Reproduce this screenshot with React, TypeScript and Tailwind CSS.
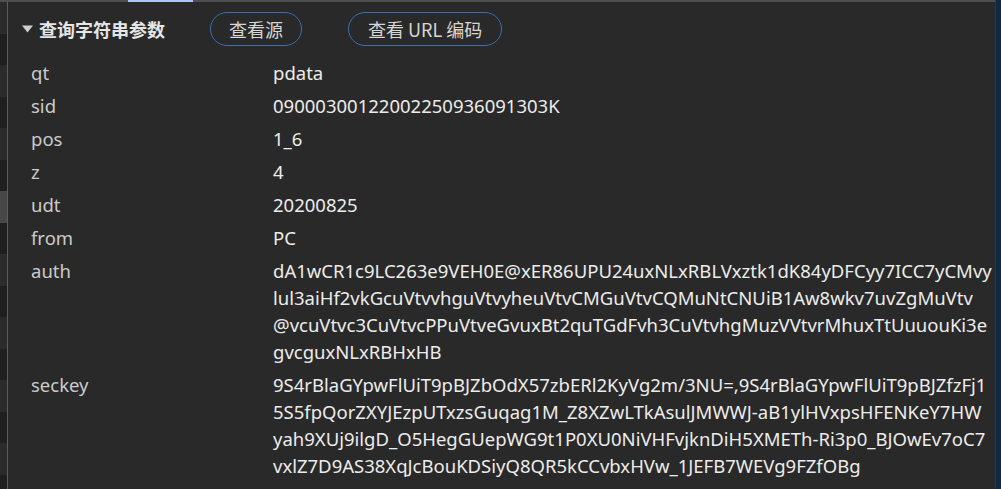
import React from "react";

interface Param {
  name: string;
  lines: string[];
}

const params: Param[] = [
  { name: "qt", lines: ["pdata"] },
  { name: "sid", lines: ["09000300122002250936091303K"] },
  { name: "pos", lines: ["1_6"] },
  { name: "z", lines: ["4"] },
  { name: "udt", lines: ["20200825"] },
  { name: "from", lines: ["PC"] },
  {
    name: "auth",
    lines: [
      "dA1wCR1c9LC263e9VEH0E@xER86UPU24uxNLxRBLVxztk1dK84yDFCyy7ICC7yCMvy",
      "lul3aiHf2vkGcuVtvvhguVtvyheuVtvCMGuVtvCQMuNtCNUiB1Aw8wkv7uvZgMuVtv",
      "@vcuVtvc3CuVtvcPPuVtveGvuxBt2quTGdFvh3CuVtvhgMuzVVtvrMhuxTtUuuouKi3e",
      "gvcguxNLxRBHxHB",
    ],
  },
  {
    name: "seckey",
    lines: [
      "9S4rBlaGYpwFlUiT9pBJZbOdX57zbERl2KyVg2m/3NU=,9S4rBlaGYpwFlUiT9pBJZfzFj1",
      "5S5fpQorZXYJEzpUTxzsGuqag1M_Z8XZwLTkAsulJMWWJ-aB1ylHVxpsHFENKeY7HW",
      "yah9XUj9ilgD_O5HegGUepWG9t1P0XU0NiVHFvjknDiH5XMETh-Ri3p0_BJOwEv7oC7",
      "vxlZ7D9AS38XqJcBouKDSiyQ8QR5kCCvbxHVw_1JEFB7WEVg9FZfOBg",
    ],
  },
];

// left gutter stripes, 31.5px each; index 6 is the highlighted one
const stripes = Array.from({ length: 16 }, (_, i) => i);

function Caret() {
  return (
    <svg width="11" height="8" viewBox="0 0 11 8" className="mr-[6px] shrink-0">
      <path d="M0 0.5h11L5.5 7.5z" fill="#cfcfcf" />
    </svg>
  );
}

export default function App() {
  return (
    <div
      className="flex h-[489px] w-[1001px] overflow-hidden bg-[#292929] text-[18px]"
      style={{ fontFamily: '"Noto Sans", "Noto Sans CJK SC", sans-serif' }}
    >
      <div className="flex min-w-0 flex-1 flex-col">
        <div className="flex h-[2px] shrink-0 bg-[#4f4f4f]">
          <div className="ml-[128px] h-full w-[65px] bg-[#a8c7fa]" />
        </div>

        <div className="flex min-h-0 flex-1">
          <div className="flex w-[7px] shrink-0 flex-col">
            {stripes.map((i) => (
              <div
                key={i}
                className={
                  i === 6
                    ? "h-[31.5px] shrink-0 bg-[#484848]"
                    : i % 2 === 0
                      ? "h-[31.5px] shrink-0 bg-[#2b2b2b]"
                      : "h-[31.5px] shrink-0 bg-[#1f1f1f]"
                }
              />
            ))}
          </div>
          <div className="w-px shrink-0 bg-[#5c5c5c]" />

          <main className="min-w-0 flex-1">
            <div className="flex h-[54px] items-center pl-[14px]">
              <Caret />
              <span
                className="font-bold text-[#e6e6e6]"
                style={{ fontFamily: '"Noto Sans CJK SC", sans-serif' }}
              >
                查询字符串参数
              </span>
              <button
                className="ml-[45px] flex h-[34px] items-center rounded-full border border-[#3572b0] px-[18px] text-[#d6d6d6]"
                style={{ fontFamily: '"Noto Sans CJK SC", sans-serif' }}
              >
                查看源
              </button>
              <button
                className="ml-[46px] flex h-[34px] items-center rounded-full border border-[#3572b0] px-[19px] text-[#d6d6d6]"
                style={{ fontFamily: '"Noto Sans CJK SC", sans-serif' }}
              >
                查看 URL 编码
              </button>
            </div>

            <div className="grid grid-cols-[242px_1fr] pl-[23px] text-[18.5px]">
              {params.map((p) => (
                <React.Fragment key={p.name}>
                  <div className="py-[3px] leading-[27px] text-[#cbcbcb]">{p.name}</div>
                  <div className="py-[3px] leading-[27px] text-[#ececec]">
                    {p.lines.map((l, i) => (
                      <div key={i} className="whitespace-nowrap">
                        {l}
                      </div>
                    ))}
                  </div>
                </React.Fragment>
              ))}
            </div>
          </main>
        </div>
      </div>
      <div className="w-px shrink-0 bg-[#343434]" />
      <div className="w-[5px] shrink-0 bg-[#0f2a47]" />
    </div>
  );
}
